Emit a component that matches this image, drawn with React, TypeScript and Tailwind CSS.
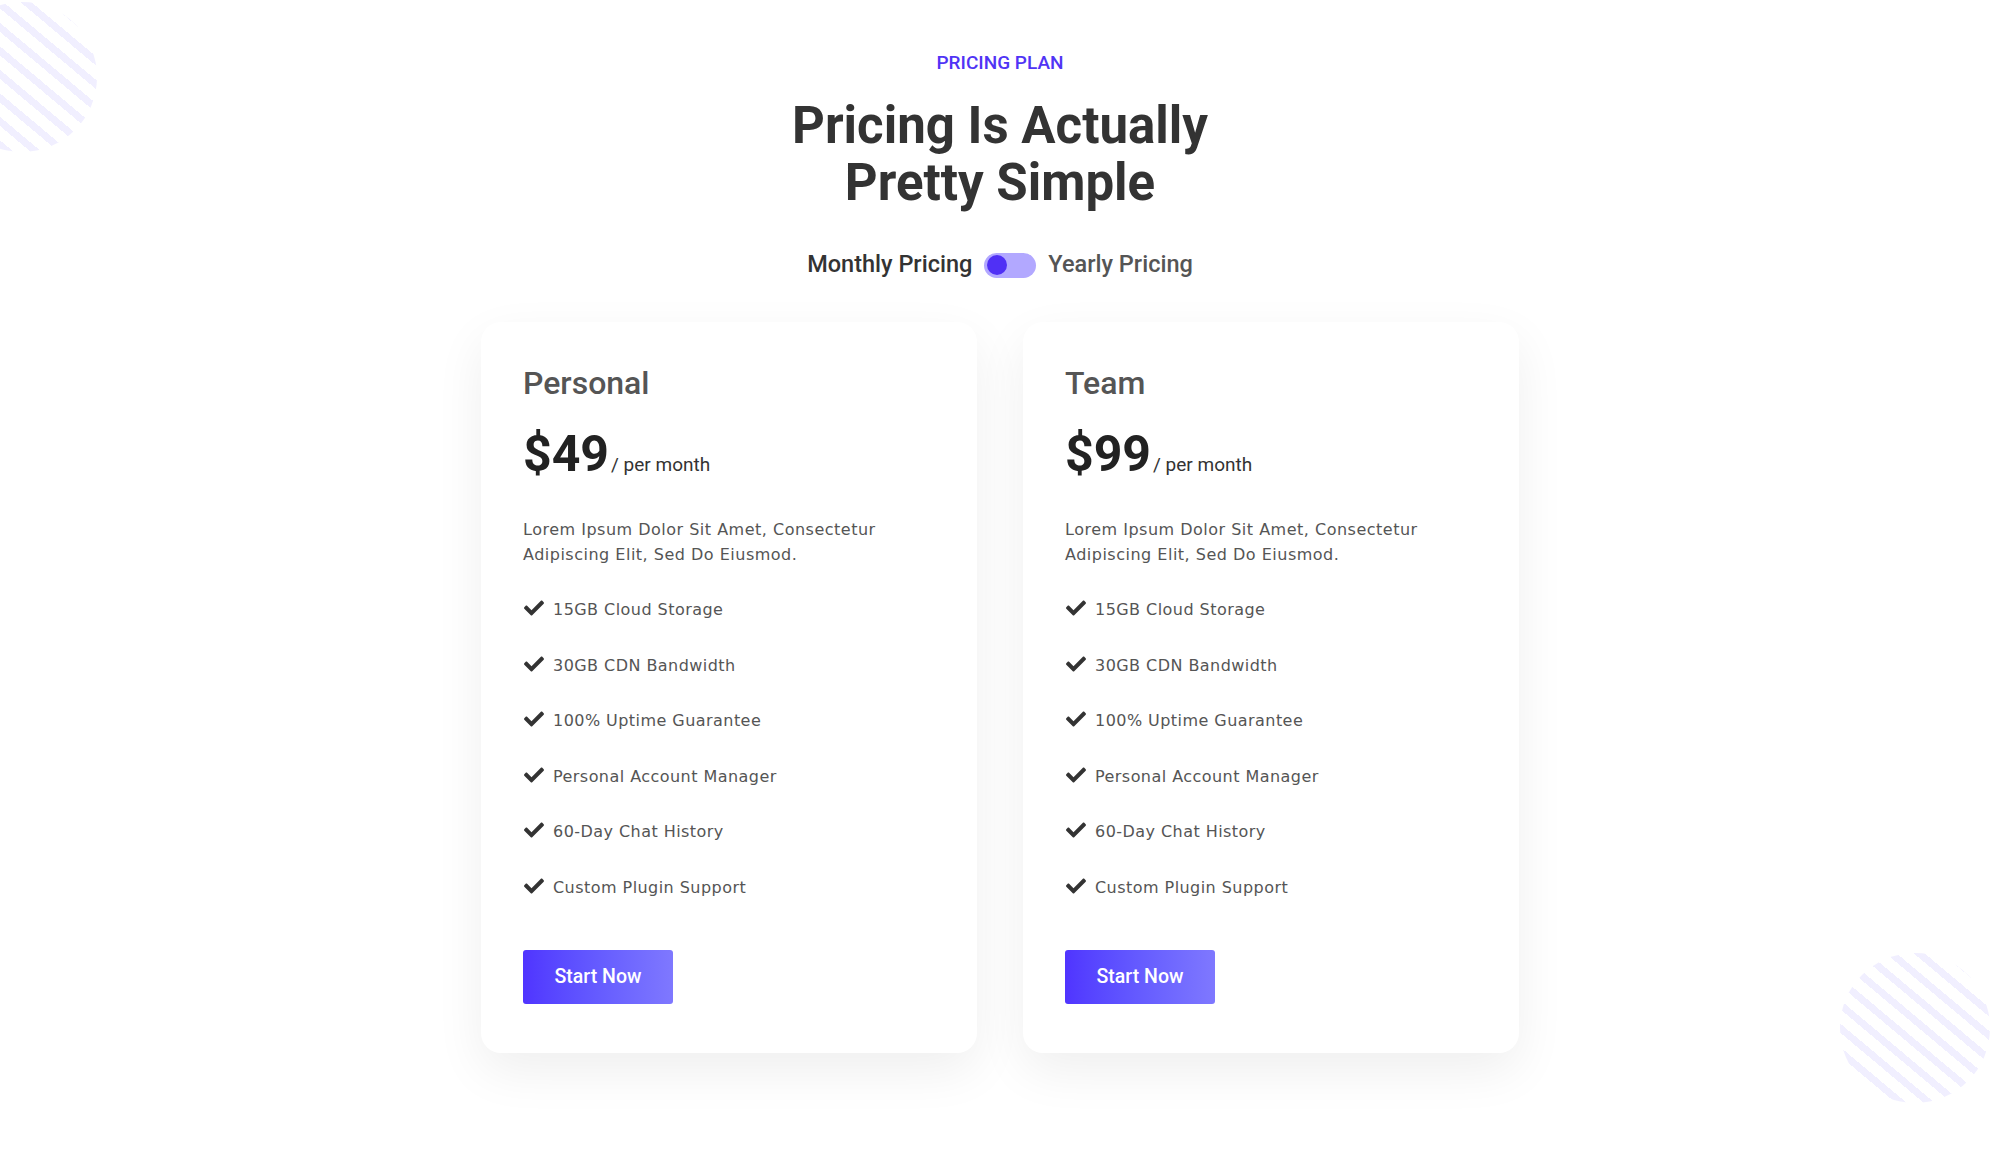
import { FaCheck } from "react-icons/fa";

const plans = [
  { name: "Personal", price: "$49" },
  { name: "Team", price: "$99" },
];

const features = [
  "15GB Cloud Storage",
  "30GB CDN Bandwidth",
  "100% Uptime Guarantee",
  "Personal Account Manager",
  "60-Day Chat History",
  "Custom Plugin Support",
];

function StripedCircle({ className }: { className: string }) {
  return (
    <div
      className={`absolute h-[150px] w-[150px] rounded-full bg-[repeating-linear-gradient(40deg,rgba(90,70,255,0.085)_0px,rgba(90,70,255,0.085)_7px,transparent_7px,transparent_18px)] ${className}`}
    />
  );
}

function PlanCard({ name, price }: { name: string; price: string }) {
  return (
    <div className="rounded-[20px] bg-white px-[42px] pt-[42px] pb-[49px] shadow-[0_18px_50px_rgba(0,0,0,0.065)]">
      <h3 className="font-['Roboto',sans-serif] text-[32px] font-medium leading-[38px] text-[#555]">{name}</h3>
      <div className="mt-[27px] flex items-baseline font-['Roboto',sans-serif]">
        <span className="text-[50px] font-bold leading-none text-[#222]">{price}</span>
        <span className="ml-[2px] text-[19px] leading-none text-[#333]">/ per month</span>
      </div>
      <p className="mt-[38px] font-['DejaVu_Sans',sans-serif] text-[16px] leading-[25px] tracking-[0.5px] text-[#555]">
        Lorem Ipsum Dolor Sit Amet, Consectetur
        <br />
        Adipiscing Elit, Sed Do Eiusmod.
      </p>
      <ul className="mt-[30px] flex flex-col gap-[30.6px]">
        {features.map((f) => (
          <li key={f} className="flex h-[25px] items-center">
            <FaCheck className="mb-[3px] h-[20px] w-[22px] text-[#333]" />
            <span className="ml-[8px] font-['DejaVu_Sans',sans-serif] text-[16px] leading-[25px] tracking-[0.45px] text-[#555]">{f}</span>
          </li>
        ))}
      </ul>
      <button className="mt-[50px] h-[54px] w-[150px] rounded-[3px] bg-gradient-to-r from-[#5034ff] to-[#7f78ff] font-['Roboto',sans-serif] text-[19.5px] font-medium text-white">
        Start Now
      </button>
    </div>
  );
}

export default function App() {
  return (
    <div className="relative min-h-[1150px] overflow-hidden bg-white pt-[52px]">
      <StripedCircle className="left-[-53px] top-[2px]" />
      <StripedCircle className="left-[1840px] top-[953px]" />

      <div className="relative flex flex-col items-center font-['Roboto',sans-serif]">
        <p className="text-[19px] font-medium leading-[22px] text-[#5034f5]">PRICING PLAN</p>
        <h1 className="mt-[23px] text-center text-[51px] font-bold leading-[57px] text-[#333]">
          Pricing Is Actually
          <br />
          Pretty Simple
        </h1>
        <div className="mt-[39px] flex h-[30px] items-center gap-[12px] text-[23.5px] font-medium">
          <span className="text-[#333]">Monthly Pricing</span>
          <div className="flex h-[25px] w-[52px] items-center rounded-full bg-[#b2a8ff] px-[3px]">
            <div className="h-[20px] w-[20px] rounded-full bg-[#5030f5]" />
          </div>
          <span className="text-[#555]">Yearly Pricing</span>
        </div>

        <div className="mt-[42px] grid w-[1038px] grid-cols-2 gap-[46px]">
          {plans.map((p) => (
            <PlanCard key={p.name} name={p.name} price={p.price} />
          ))}
        </div>
      </div>
    </div>
  );
}
